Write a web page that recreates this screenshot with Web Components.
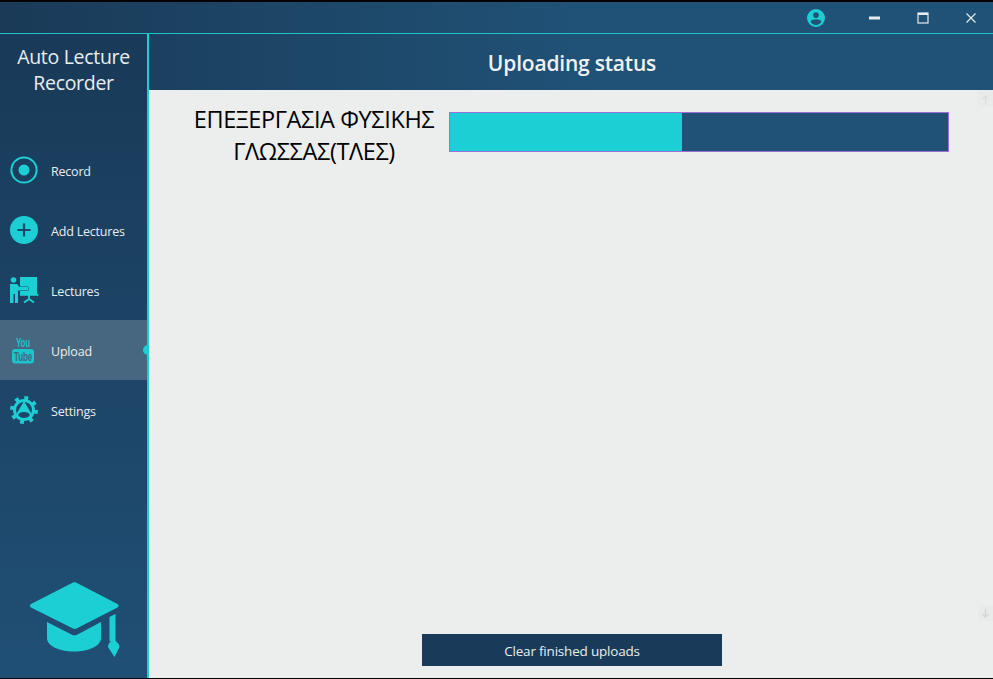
<!DOCTYPE html>
<html>
<head>
<meta charset="utf-8">
<title>Auto Lecture Recorder</title>
<style>
html, body { margin: 0; padding: 0; height: 100%; overflow: hidden; background: #000; }
</style>
</head>
<body>
<app-window>
    <side-bar slot="side">
        <nav-item label="Record">
            <svg slot="icon" width="30" height="30" viewBox="0 0 30 30"><circle cx="14" cy="15" r="12.6" fill="none" stroke="#1ccfd4" stroke-width="2"/><circle cx="14" cy="15" r="5.5" fill="#1ccfd4"/></svg>
        </nav-item>
        <nav-item label="Add Lectures">
            <svg slot="icon" width="30" height="30" viewBox="0 0 30 30"><circle cx="14" cy="15" r="14" fill="#1ccfd4"/><path d="M14 8.5v13M7.5 15h13" stroke="#1d476a" stroke-width="2.2" fill="none"/></svg>
        </nav-item>
        <nav-item label="Lectures">
            <svg slot="icon" width="30" height="30" viewBox="0 0 30 30">
              <path d="M10 2h17v17h1.500v1.800H10z" fill="#1ccfd4"/>
              <path d="M19 20v4M19 24l-5 3.500M19 24l5 3.500" stroke="#1ccfd4" stroke-width="1.800" fill="none"/>
              <circle cx="3.500" cy="5" r="2.800" fill="#1ccfd4"/>
              <path d="M0 9h7l2.500 3H18v3.500H8V28H5v-9H3.500v9H0z" fill="#1ccfd4" stroke="#1d4568" stroke-width="1" paint-order="stroke"/>
            </svg>
        </nav-item>
        <nav-item label="Upload" active>
            <svg slot="icon" width="30" height="30" viewBox="0 0 30 30"><text x="13" y="12" text-anchor="middle" font-family="Liberation Sans, sans-serif" font-size="12" font-weight="700" fill="#1cc4cc" textLength="14" lengthAdjust="spacingAndGlyphs">You</text><rect x="2" y="14" width="22" height="14.500" rx="3" fill="#1cc4cc"/><text x="13" y="26" text-anchor="middle" font-family="Liberation Sans, sans-serif" font-size="12" font-weight="700" fill="#47667f" textLength="18" lengthAdjust="spacingAndGlyphs">Tube</text></svg>
        </nav-item>
        <nav-item label="Settings">
            <svg slot="icon" width="30" height="30" viewBox="0 0 30 30">
              <circle cx="14" cy="15" r="12" fill="none" stroke="#1ccfd4" stroke-width="4" stroke-dasharray="3.800 5.620"/>
              <circle cx="14" cy="15" r="9.500" fill="none" stroke="#1ccfd4" stroke-width="3"/>
              <path d="M14 6l8.500 14.500h-17z" fill="#1ccfd4"/>
              <ellipse cx="14" cy="19.500" rx="5.500" ry="2.500" fill="#1d4568"/>
            </svg>
        </nav-item>
    </side-bar>
    <title-bar slot="top"></title-bar>
    <upload-page slot="main">
        <upload-row name="ΕΠΕΞΕΡΓΑΣΙΑ ΦΥΣΙΚΗΣ ΓΛΩΣΣΑΣ(ΤΛΕΣ)" progress="46.6"></upload-row>
    </upload-page>
</app-window>

<script>
class AppWindow extends HTMLElement
{
    constructor()
    {
        super();
        this.attachShadow({ mode: 'open' });
    }

    connectedCallback()
    {
        this.shadowRoot.innerHTML = `
      <style>
        :host {
            display: grid;
            grid-template-columns: 147px 1fr;
            grid-template-rows: 31px 1px 1fr;
            width: 993px;
            height: 676px;
            margin-top: 2px;
            background: linear-gradient(90deg, #1a3a57 0%, #205277 60%);
        }
        .top { grid-column: 1 / 3; min-width: 0; }
        .line { grid-column: 1 / 3; background: #1fc3ca; }
        .side { display: flex; min-height: 0; }
        .main { display: flex; min-height: 0; border-left: 2px solid #1ccfd4; }
      </style>
      <div class="top"><slot name="top"></slot></div>
      <div class="line"></div>
      <div class="side"><slot name="side"></slot></div>
      <div class="main"><slot name="main"></slot></div>
    `;
    }
}

class TitleBar extends HTMLElement
{
    constructor()
    {
        super();
        this.attachShadow({ mode: 'open' });
    }

    connectedCallback()
    {
        this.shadowRoot.innerHTML = `
      <style>
        :host {
            display: flex;
            align-items: center;
            justify-content: flex-end;
            height: 31px;
        }
        .btn {
            width: 44px;
            height: 31px;
            display: flex;
            align-items: center;
            justify-content: center;
        }
        .max { width: 52px; }
        .user { margin-right: 21px; width: 32px; }
      </style>
      <div class="btn user">
        <svg width="18" height="18" viewBox="0 0 18 18"><path fill-rule="evenodd" d="M9 0a9 9 0 1 1 0 18A9 9 0 0 1 9 0zm0 3.200a2.900 2.900 0 1 0 0 5.800 2.900 2.900 0 0 0 0-5.800zM3.500 12.500C4.500 14.800 6.600 15.900 9 15.900s4.500-1.100 5.500-3.400C13.800 11.100 11.400 10.300 9 10.300s-4.800.8-5.500 2.200z" fill="#1ccfd4"/></svg>
      </div>
      <div class="btn"><svg width="12" height="4" viewBox="0 0 12 4"><rect y="0.500" width="11" height="3" fill="#e6ebee"/></svg></div>
      <div class="btn max"><svg width="12" height="12" viewBox="0 0 12 12"><rect x="1" y="1" width="10" height="10" fill="none" stroke="#e6ebee" stroke-width="1.200"/><rect x="1" y="1" width="10" height="2" fill="#e6ebee"/></svg></div>
      <div class="btn"><svg width="12" height="12" viewBox="0 0 12 12"><path d="M1.500 1.500l9 9M10.500 1.500l-9 9" stroke="#e6ebee" stroke-width="1.200" fill="none"/></svg></div>
    `;
    }
}

class SideBar extends HTMLElement
{
    constructor()
    {
        super();
        this.attachShadow({ mode: 'open' });
    }

    connectedCallback()
    {
        this.shadowRoot.innerHTML = `
      <style>
        :host {
            display: flex;
            flex-direction: column;
            width: 147px;
            height: 100%;
            background: linear-gradient(180deg, #193a58 0%, #204f75 100%);
            font-family: "Open Sans", sans-serif;
            color: #e9eef1;
        }
        h1 {
            margin: 0;
            padding-top: 10px;
            height: 106px;
            box-sizing: border-box;
            text-align: center;
            font-size: 19.5px;
            line-height: 26px;
            font-weight: 400;
            letter-spacing: -0.3px;
        }
        .items { display: flex; flex-direction: column; }
        .logo { margin-top: auto; padding: 0 0 15px 29px; display: flex; }
      </style>
      <h1>Auto Lecture<br>Recorder</h1>
      <div class="items"><slot></slot></div>
      <div class="logo">
        <svg width="92" height="82" viewBox="0 0 92 82">
          <path d="M44 1.500a4 4 0 0 1 3 0L88.500 23a2 2 0 0 1 0 3.500L47.500 47.500a4 4 0 0 1-3.500 0L2 26.500a2 2 0 0 1 0-3.500z" fill="#1ccfd4"/>
          <path d="M18 41l24.500 12.500a6 6 0 0 0 6 0L72 41v16c0 8-12 13.500-27 13.500S18 65 18 57z" fill="#1ccfd4"/>
          <path d="M80.500 36l6-3V60c3 2 4 4 4 6l-5 10L79 66c0-2 1-4 3-6h-1.500z" fill="#1ccfd4"/>
        </svg>
      </div>
    `;
    }
}

class NavItem extends HTMLElement
{
    constructor()
    {
        super();
        this.attachShadow({ mode: 'open' });
    }

    connectedCallback()
    {
        this.shadowRoot.innerHTML = `
      <style>
        :host {
            display: flex;
            align-items: center;
            position: relative;
            height: 60px;
            padding-left: 10px;
            font-size: 12.5px;
            letter-spacing: -0.2px;
        }
        :host([active]) { background: #47667f; }
        .icon { width: 30px; height: 30px; display: flex; flex: none; }
        .label { margin-left: 11px; padding-top: 2px; }
        .dot {
            display: none;
            position: absolute;
            right: -1px;
            top: 25px;
            width: 5px;
            height: 10px;
            border-radius: 5px 0 0 5px;
            background: #1ccfd4;
        }
        :host([active]) .dot { display: block; }
      </style>
      <div class="icon"><slot name="icon"></slot></div>
      <span class="label">${this.getAttribute('label')}</span>
      <div class="dot"></div>
    `;
    }
}

class UploadPage extends HTMLElement
{
    constructor()
    {
        super();
        this.attachShadow({ mode: 'open' });
    }

    connectedCallback()
    {
        this.shadowRoot.innerHTML = `
      <style>
        :host {
            display: flex;
            flex-direction: column;
            flex: 1;
            min-width: 0;
            font-family: "Open Sans", sans-serif;
        }
        header {
            height: 56px;
            box-sizing: border-box;
            flex: none;
            display: flex;
            align-items: center;
            justify-content: center;
            padding: 2px 0 0 2px;
            color: #eef2f4;
            font-size: 21px;
            font-weight: 600;
            letter-spacing: -0.2px;
        }
        .body {
            flex: 1;
            display: flex;
            flex-direction: column;
            position: relative;
            background: #eceeee;
            min-height: 0;
        }
        .list { flex: 1; padding: 12px 0 0 0; }
        .foot { display: flex; justify-content: center; padding: 0 0 12px 2px; }
        button {
            width: 300px;
            height: 32px;
            border: 0;
            background: #193a58;
            color: #e9eef1;
            font: 400 13.5px "Open Sans", sans-serif;
            letter-spacing: -0.2px;
            padding: 2px 0 0 0;
        }
        .arrow {
            position: absolute;
            right: 0;
            width: 15px;
            height: 16px;
            background: #e9ebeb;
            display: flex;
            align-items: center;
            justify-content: center;
        }
        .up { top: 1px; }
        .down { top: 515px; }
      </style>
      <header>Uploading status</header>
      <div class="body">
        <div class="list"><slot></slot></div>
        <div class="foot"><button>Clear finished uploads</button></div>
        <div class="arrow up"><svg width="9" height="9" viewBox="0 0 9 9"><path d="M4.500 9V1M1.500 4l3-3 3 3" fill="none" stroke="#dcdfdf" stroke-width="1.400"/></svg></div>
        <div class="arrow down"><svg width="9" height="9" viewBox="0 0 9 9"><path d="M4.500 0v8M1.500 5l3 3 3-3" fill="none" stroke="#d3d6d6" stroke-width="1.400"/></svg></div>
      </div>
    `;
    }
}

class UploadRow extends HTMLElement
{
    constructor()
    {
        super();
        this.attachShadow({ mode: 'open' });
    }

    connectedCallback()
    {
        this.shadowRoot.innerHTML = `
      <style>
        :host {
            display: flex;
            align-items: flex-start;
            gap: 6px;
            padding-left: 36px;
        }
        .name {
            width: 258px;
            text-align: center;
            font-size: 23.5px;
            line-height: 32px;
            padding-top: 1px;
            letter-spacing: -0.4px;
            color: #000;
        }
        .bar {
            width: 498px;
            height: 38px;
            margin-top: 10px;
            border: 1px solid #9a6fe0;
            background: #205277;
            display: flex;
        }
        .fill { height: 100%; background: #1ccfd4; }
      </style>
      <div class="name">${this.getAttribute('name')}</div>
      <div class="bar"><div class="fill" style="width:${this.getAttribute('progress')}%"></div></div>
    `;
    }
}

window.customElements.define("app-window", AppWindow)
window.customElements.define("title-bar", TitleBar)
window.customElements.define("side-bar", SideBar)
window.customElements.define("nav-item", NavItem)
window.customElements.define("upload-page", UploadPage)
window.customElements.define("upload-row", UploadRow)
</script>
</body>
</html>
